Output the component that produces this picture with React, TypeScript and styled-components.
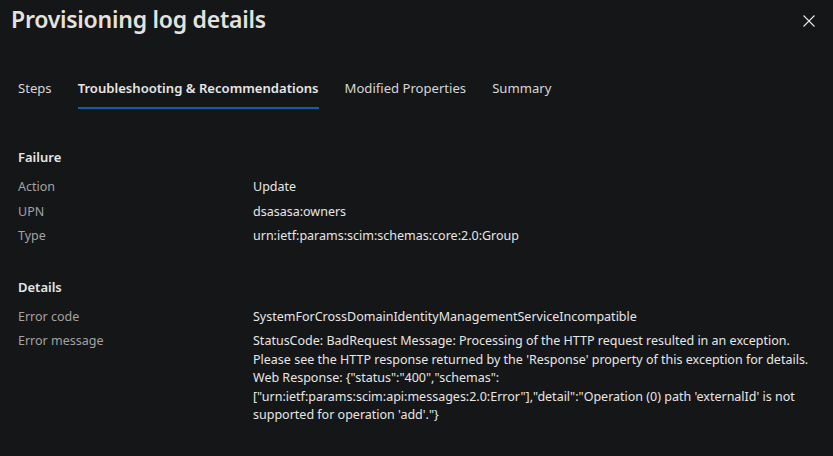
import * as React from "react";
import styled, { createGlobalStyle } from "styled-components";

const GlobalStyle = createGlobalStyle`
  html, body {
    margin: 0;
    background: #151618;
  }
  body {
    font-family: "Noto Sans", "Open Sans", sans-serif;
    -webkit-font-smoothing: antialiased;
  }
`;

const Panel = styled.div`
  width: 833px;
  height: 456px;
  background: #151618;
  color: #e3e3e3;
  overflow: hidden;
  box-sizing: border-box;
`;

const Header = styled.div`
  display: flex;
  align-items: flex-start;
  justify-content: space-between;
  padding: 2px 18px 0 11px;
`;

const Title = styled.h1`
  margin: 0;
  font-size: 23px;
  line-height: 34px;
  font-weight: 600;
  color: #e4e2de;
  letter-spacing: -0.25px;
`;

const CloseButton = styled.button`
  background: none;
  border: none;
  padding: 0;
  margin-top: 13px;
  width: 12px;
  height: 12px;
  display: flex;
  cursor: pointer;
`;

const Tabs = styled.div`
  display: flex;
  gap: 26px;
  padding: 43px 0 0 18px;
`;

const Tab = styled.div<{ active?: boolean }>`
  font-size: 13.1px;
  line-height: 18px;
  padding: 0 0 10px;
  color: ${p => (p.active ? "#e6e6e6" : "#d6d6d6")};
  font-weight: ${p => (p.active ? 600 : 400)};
  border-bottom: 2px solid ${p => (p.active ? "#0f5fa8" : "transparent")};
  white-space: nowrap;
`;

const Body = styled.div`
  padding: 39px 0 0 18px;
`;

const Section = styled.section`
  margin-bottom: 29px;
`;

const SectionTitle = styled.h3`
  margin: 0 0 9px;
  font-size: 13px;
  line-height: 18px;
  font-weight: 600;
  color: #e6e6e6;
`;

const Row = styled.div`
  display: grid;
  grid-template-columns: 235px 565px;
  padding: 3px 0;
  font-size: 12.5px;
  line-height: 18.5px;
`;

const Label = styled.div`
  color: #a3a3a3;
`;

const Value = styled.div`
  color: #e6e6e6;
`;

const CloseIcon = () => (
  <svg width="12" height="12" viewBox="0 0 12 12">
    <path d="M0.5 0.5 L11.5 11.5 M11.5 0.5 L0.5 11.5" stroke="#e6e6e6" strokeWidth="1.1" />
  </svg>
);

const failure = [
  { label: "Action", value: "Update" },
  { label: "UPN", value: "dsasasa:owners" },
  { label: "Type", value: "urn:ietf:params:scim:schemas:core:2.0:Group" },
];

const details = [
  { label: "Error code", value: "SystemForCrossDomainIdentityManagementServiceIncompatible" },
  {
    label: "Error message",
    value:
      "StatusCode: BadRequest Message: Processing of the HTTP request resulted in an exception. Please see the HTTP response returned by the 'Response' property of this exception for details. Web Response: {\"status\":\"400\",\"schemas\":[\"urn:ietf:params:scim:api:messages:2.0:Error\"],\"detail\":\"Operation (0) path 'externalId' is not supported for operation 'add'.\"}",
  },
];

const tabs = ["Steps", "Troubleshooting & Recommendations", "Modified Properties", "Summary"];

export default function App() {
  return (
    <Panel>
      <GlobalStyle />
      <Header>
        <Title>Provisioning log details</Title>
        <CloseButton aria-label="Close">
          <CloseIcon />
        </CloseButton>
      </Header>
      <Tabs>
        {tabs.map((t, i) => (
          <Tab key={t} active={i === 1}>
            {t}
          </Tab>
        ))}
      </Tabs>
      <Body>
        <Section>
          <SectionTitle>Failure</SectionTitle>
          {failure.map(r => (
            <Row key={r.label}>
              <Label>{r.label}</Label>
              <Value>{r.value}</Value>
            </Row>
          ))}
        </Section>
        <Section>
          <SectionTitle>Details</SectionTitle>
          {details.map(r => (
            <Row key={r.label}>
              <Label>{r.label}</Label>
              <Value>{r.value}</Value>
            </Row>
          ))}
        </Section>
      </Body>
    </Panel>
  );
}
